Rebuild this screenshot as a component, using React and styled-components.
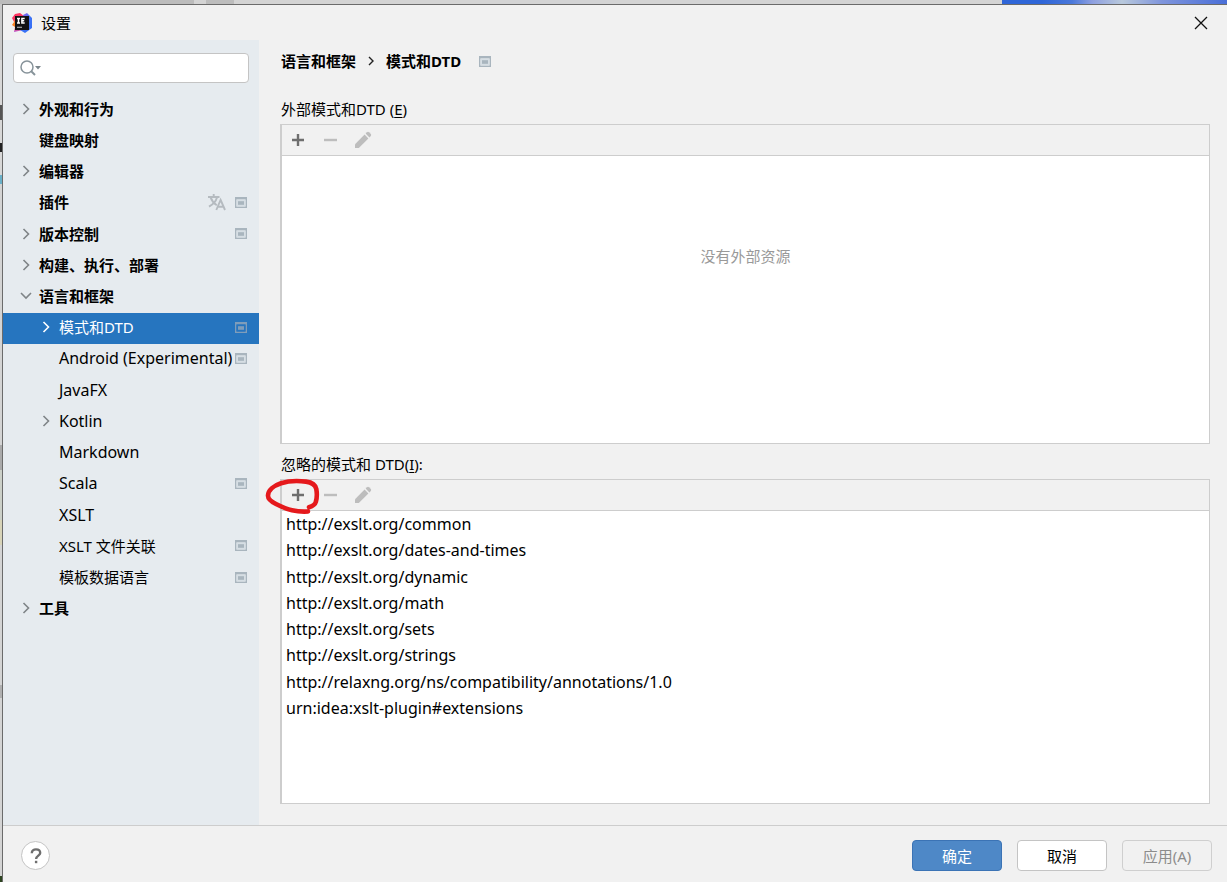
import styled, { createGlobalStyle } from "styled-components"

const tree = [
    {label: "外观和行为", group: true, arrow: "closed"},
    {label: "键盘映射", group: true},
    {label: "编辑器", group: true, arrow: "closed"},
    {label: "插件", group: true, translate: true, project: true},
    {label: "版本控制", group: true, arrow: "closed", project: true},
    {label: "构建、执行、部署", group: true, arrow: "closed"},
    {label: "语言和框架", group: true, arrow: "open"},
    {label: "模式和DTD", arrow: "closed", project: true, selected: true},
    {label: "Android (Experimental)", latin: true, project: true},
    {label: "JavaFX", latin: true},
    {label: "Kotlin", latin: true, arrow: "closed"},
    {label: "Markdown", latin: true},
    {label: "Scala", latin: true, project: true},
    {label: "XSLT", latin: true},
    {label: "XSLT 文件关联", project: true},
    {label: "模板数据语言", project: true},
    {label: "工具", group: true, arrow: "closed"},
]

const ignored = [
    "http://exslt.org/common",
    "http://exslt.org/dates-and-times",
    "http://exslt.org/dynamic",
    "http://exslt.org/math",
    "http://exslt.org/sets",
    "http://exslt.org/strings",
    "http://relaxng.org/ns/compatibility/annotations/1.0",
    "urn:idea:xslt-plugin#extensions",
]

export default function App() {
    return(
        <>
            <GlobalStyle/>
            <Desktop>
                <Dialog>
                    <TitleBar>
                        <AppLogo/>
                        <Title>设置</Title>
                        <CloseButton aria-label="关闭">
                            <svg width="14" height="14" viewBox="0 0 14 14" stroke="#111" strokeWidth="1.3">
                                <path d="M1 1L13 13M13 1L1 13"/>
                            </svg>
                        </CloseButton>
                    </TitleBar>
                    <Body>
                        <Sidebar>
                            <SearchBox>
                                <SearchIcon/>
                                <SearchInput type="text" aria-label="搜索"/>
                            </SearchBox>
                            <Tree>
                                {tree.map(item=><TreeItem key={item.label} {...item}/>)}
                            </Tree>
                        </Sidebar>
                        <Content>
                            <Breadcrumb>
                                <span>语言和框架</span>
                                <svg width="6" height="10" viewBox="0 0 6 10" fill="none" stroke="#222" strokeWidth="1.4">
                                    <path d="M1 1L5 5L1 9"/>
                                </svg>
                                <span>模式和DTD</span>
                                <CrumbIcon><ProjectIcon/></CrumbIcon>
                            </Breadcrumb>
                            <PanelLabel>外部模式和DTD (<u>E</u>)</PanelLabel>
                            <Panel $grow={320}>
                                <PanelTools/>
                                <Empty>没有外部资源</Empty>
                            </Panel>
                            <PanelLabel>忽略的模式和 DTD(<u>I</u>):</PanelLabel>
                            <Panel $grow={325}>
                                <PanelTools marked/>
                                <UrlList>
                                    {ignored.map(url=><Url key={url}>{url}</Url>)}
                                </UrlList>
                            </Panel>
                        </Content>
                    </Body>
                    <Footer>
                        <HelpButton aria-label="帮助">
                            <svg width="12" height="16" viewBox="0 0 12 16" fill="none" stroke="#6e6e6e" strokeWidth="2.4">
                                <path d="M1.8 5.2C1.8 2.8 3.5 1.4 6 1.4S10.2 2.8 10.2 4.9C10.2 7.6 6.1 7.7 6.1 11"/>
                                <path d="M6.1 12.8V15.2"/>
                            </svg>
                        </HelpButton>
                        <Buttons>
                            <Button $primary>确定</Button>
                            <Button>取消</Button>
                            <Button disabled>应用(A)</Button>
                        </Buttons>
                    </Footer>
                </Dialog>
            </Desktop>
        </>
    )
}

function TreeItem({label, group, latin, arrow, translate, project, selected}) {
    return(
        <Row $nested={!group} $selected={selected}>
            <ArrowSlot>{arrow && <Arrow open={arrow == "open"} selected={selected}/>}</ArrowSlot>
            <RowLabel $latin={latin}>{label}</RowLabel>
            <RowIcons>
                {translate && <TranslateIcon/>}
                {project && <ProjectIcon selected={selected}/>}
            </RowIcons>
        </Row>
    )
}

function PanelTools({marked}) {
    return(
        <Toolbar>
            <ToolButton aria-label="添加">
                <svg width="14" height="14" viewBox="0 0 14 14" stroke="#6e6e6e" strokeWidth="2.4">
                    <path d="M7 1V13M1 7H13"/>
                </svg>
            </ToolButton>
            <ToolButton aria-label="移除" disabled>
                <svg width="14" height="14" viewBox="0 0 14 14" stroke="#bdbdbd" strokeWidth="2.4">
                    <path d="M0 7H13"/>
                </svg>
            </ToolButton>
            <ToolButton aria-label="编辑" disabled>
                <svg width="18" height="18" viewBox="0 0 18 18" fill="#bdbdbd">
                    <path d="M0 17V13.2L9.6 3.6L13.4 7.4L3.8 17Z"/>
                    <path d="M10.6 2.6L12 1.2Q13 .4 14 1.2L15.8 3Q16.6 4 15.8 5L14.4 6.4Z"/>
                </svg>
            </ToolButton>
            {marked &&
                <Marker width="58" height="38" viewBox="0 0 58 38" fill="none" stroke="#e5191c" strokeWidth="4.6" strokeLinecap="round" strokeLinejoin="round">
                    <path d="M43 34.5C38 34.8 32 34.4 27 33.3C21 32 16 29.5 11 27C6 24.5 2.8 22 3 18.5C3.2 13 9 8.5 16 6.2C23 4 34 3.7 41 4.6C47 5.4 50.5 8 51.3 12C52 16 52 21 50.8 25C50 28 47.5 29.2 44 30.2"/>
                </Marker>
            }
        </Toolbar>
    )
}

function Arrow({open, selected}) {
    const color = selected ? "#fff" : "#7f8487"
    return(
        <svg width="12" height="12" viewBox="0 0 12 12" fill="none" stroke={color} strokeWidth="1.6">
            <path d={open ? "M1 3L6 8L11 3" : "M3.5 1L8.5 6L3.5 11"}/>
        </svg>
    )
}

function ProjectIcon({selected}) {
    return(
        <svg width="12" height="11" viewBox="0 0 12 11">
            <path fill={selected ? "#7f9dba" : "#a9b5be"} fillRule="evenodd" d="M0 0H12V11H0ZM1.5 2.5V9.5H10.5V2.5Z"/>
            <rect x="1.5" y="2.5" width="9" height="7" fill={selected ? "#2675bf" : "#d6dee4"}/>
            <rect x="3" y="4.2" width="6" height="3.6" fill={selected ? "#7f9dba" : "#a9b5be"}/>
        </svg>
    )
}

function TranslateIcon() {
    return(
        <svg width="18" height="17" viewBox="0 0 18 17" fill="none" stroke="#b5bbc0" strokeWidth="1.9">
            <path d="M0 3H11.5M5.7 0V3M2.6 3.4C3.8 7 6 9.5 8.8 11.2M9 3.4C8 7 5 10.3 1 12.6"/>
            <path d="M8.3 16L12.6 5.8L17 16M10 12.8H15.3"/>
        </svg>
    )
}

function SearchIcon() {
    return(
        <svg width="22" height="16" viewBox="0 0 22 16" fill="none" stroke="#87939a" strokeWidth="1.5">
            <circle cx="7" cy="7" r="6"/>
            <path d="M11 11L15 15" strokeWidth="2"/>
            <path d="M15 6H21L18 9.5Z" fill="#7b868c" stroke="none"/>
        </svg>
    )
}

function AppLogo() {
    return(
        <svg width="20" height="20" viewBox="0 0 20 20">
            <defs>
                <linearGradient id="warm" x1="0" y1="0" x2="0" y2="1">
                    <stop offset="0" stopColor="#fe315d"/>
                    <stop offset=".35" stopColor="#fb3a6a"/>
                    <stop offset=".5" stopColor="#f98a22"/>
                    <stop offset=".7" stopColor="#f97a22"/>
                    <stop offset="1" stopColor="#b747d8"/>
                </linearGradient>
                <linearGradient id="cool" x1="0" y1="0" x2="1" y2="1">
                    <stop offset="0" stopColor="#b05ae0"/>
                    <stop offset=".5" stopColor="#3f74f5"/>
                    <stop offset="1" stopColor="#2f6cf5"/>
                </linearGradient>
            </defs>
            <path fill="url(#warm)" d="M3 1L8 0L12 3L11 17L2 19L3 14L0 12L2 9L0 5Z"/>
            <path fill="url(#cool)" d="M11 2L15 0L20 5V15L13 20L8 17Z"/>
            <rect x="3" y="3" width="14" height="14" fill="#111114"/>
            <path stroke="#fff" strokeWidth="1.5" fill="none" d="M5 5.5H8M6.5 5.5V10M5 10H8M12.7 5.5H9.9V10H12.7M9.9 7.7H12.2"/>
            <path stroke="#aaa" strokeWidth="1.2" d="M5 14.3H10"/>
        </svg>
    )
}

const GlobalStyle = createGlobalStyle`
    * {
        box-sizing: border-box;
    }
    body {
        margin: 0;
        font-family: "Noto Sans","Noto Sans CJK SC",sans-serif;
        font-size: 15px;
        line-height: 20px;
        color: #000;
    }
    button, input {
        font: inherit;
        color: inherit;
    }
    svg {
        display: block;
        flex-shrink: 0;
    }
`;

const Desktop = styled.div`
    display: flex;
    min-height: 100vh;
    padding: 4px 0 0 2px;
    background:
        linear-gradient(90deg, #2f66d8 0, #2f66d8 40px, #4a78da 70px, #8d9fe0 90px, #b9c9dc 120px, #7f95dc 160px, #4a6fd8 225px) 1002px 0 / 225px 4px no-repeat,
        linear-gradient(#bdbdbd, #bdbdbd) 206px 0 / 28px 4px no-repeat,
        linear-gradient(#bcbcbc, #bcbcbc) 0 0 / 194px 4px no-repeat,
        linear-gradient(#c9c9c9 0 60px, #d8d8d8 60px 105px, #555 105px 120px, #d8d8d8 120px 143px, #222 143px 152px, #d8d8d8 152px 175px, #6ab0c8 175px 184px, #d4d4d4 184px 445px, #aaa 445px 470px, #ccd0c8 470px 520px, #d8d4b8 520px 545px, #d4d4d4 545px 685px, #b0b0b0 685px 698px, #d4d4d4 698px 876px, #2d4420 876px) 0 0 / 2px 882px no-repeat,
        #d4d4d4;
`;

const Dialog = styled.div`
    display: flex;
    flex-direction: column;
    flex: 1;
    min-width: 0;
    border: solid #6b6b6b;
    border-width: 1px 0 0 1px;
    background-color: #F1F1F1;
`;

const TitleBar = styled.header`
    display: flex;
    align-items: center;
    gap: 9px;
    height: 35px;
    padding: 0 19px 0 9px;
`;

const Title = styled.h1`
    flex: 1;
    margin: 0;
    font-size: 15px;
    font-weight: 400;
`;

const CloseButton = styled.button`
    padding: 0;
    border: 0;
    background: none;
`;

const Body = styled.div`
    display: flex;
    flex: 1;
`;

const Sidebar = styled.nav`
    width: 256px;
    flex-shrink: 0;
    padding-top: 13px;
    background-color: #E6EBEF;
`;

const SearchBox = styled.div`
    display: flex;
    align-items: center;
    height: 30px;
    margin: 0 10px 11px;
    padding: 0 6px;
    border: 1px solid #C4C4C4;
    border-radius: 4px;
    background-color: #fff;
`;

const SearchInput = styled.input`
    flex: 1;
    min-width: 0;
    border: 0;
    outline: 0;
    background: none;
`;

const Tree = styled.ul`
    display: grid;
    grid-template-columns: minmax(0, 1fr);
    grid-auto-rows: 1fr;
    min-height: 531px;
    margin: 0;
    padding: 0;
    list-style: none;
`;

const Row = styled.li`
    display: flex;
    align-items: center;
    padding: 0 12px 2px ${props=>props.$nested?37:17}px;
    font-weight: ${props=>props.$nested?400:700};
    color: ${props=>props.$selected?"#fff":"#000"};
    background-color: ${props=>props.$selected?"#2675BF":"transparent"};
`;

const ArrowSlot = styled.span`
    width: 19px;
    flex-shrink: 0;
`;

const RowLabel = styled.span`
    flex: 1;
    min-width: 0;
    font-size: ${props=>props.$latin?16:15}px;
    white-space: nowrap;
`;

const RowIcons = styled.span`
    display: flex;
    align-items: center;
    gap: 9px;
`;

const Content = styled.main`
    display: flex;
    flex-direction: column;
    flex: 1;
    min-width: 0;
    padding: 11px 17px 21px 21px;
`;

const Breadcrumb = styled.div`
    display: flex;
    align-items: center;
    gap: 12px;
    height: 20px;
    margin-bottom: 18px;
    padding-left: 1px;
    font-weight: 700;
`;

const CrumbIcon = styled.span`
    margin-left: 6px;
`;

const PanelLabel = styled.h2`
    height: 35px;
    margin: 0;
    padding: 10px 1px 5px;
    font-size: 15px;
    font-weight: 400;
    u {
        text-underline-offset: 2px;
    }
`;

const Panel = styled.section`
    display: flex;
    flex-direction: column;
    flex: ${props=>props.$grow} 0 0;
    border: 1px solid #CDCDCD;
    border-left-width: 2px;
`;

const Toolbar = styled.div`
    position: relative;
    display: flex;
    align-items: center;
    gap: 11px;
    height: 31px;
    padding-left: 5px;
    border-bottom: 1px solid #CDCDCD;
`;

const ToolButton = styled.button`
    display: flex;
    align-items: center;
    justify-content: center;
    width: 22px;
    height: 22px;
    padding: 0;
    border: 0;
    background: none;
`;

const Marker = styled.svg`
    position: absolute;
    left: -17px;
    top: -3px;
    pointer-events: none;
`;

const Empty = styled.div`
    flex: 1;
    padding-top: 90px;
    text-align: center;
    color: #999;
    background-color: #fff;
`;

const UrlList = styled.ul`
    flex: 1;
    display: grid;
    grid-template-rows: repeat(8, 1fr);
    margin: 0;
    padding: 0 4px 82px;
    font-size: 16px;
    list-style: none;
    background-color: #fff;
`;

const Url = styled.li`
    display: flex;
    align-items: center;
`;

const Footer = styled.footer`
    display: flex;
    align-items: center;
    justify-content: space-between;
    height: 57px;
    padding: 3px 15px 0 18px;
    border-top: 1px solid #CDCDCD;
`;

const HelpButton = styled.button`
    display: flex;
    align-items: center;
    justify-content: center;
    width: 29px;
    height: 29px;
    padding: 0;
    border: 1px solid #C4C4C4;
    border-radius: 50%;
    background-color: #fff;
`;

const Buttons = styled.div`
    display: flex;
    gap: 15px;
`;

const Button = styled.button`
    width: 90px;
    height: 31px;
    padding: 0;
    border: 1px solid ${props=>props.$primary?"#3B73B5":"#C4C4C4"};
    border-radius: 4px;
    color: ${props=>props.$primary?"#fff":"#000"};
    background-color: ${props=>props.$primary?"#4E88C7":"#fff"};
    &:disabled {
        color: #8C8C8C;
        border-color: #CFCFCF;
        background-color: #F1F1F1;
    }
`;
